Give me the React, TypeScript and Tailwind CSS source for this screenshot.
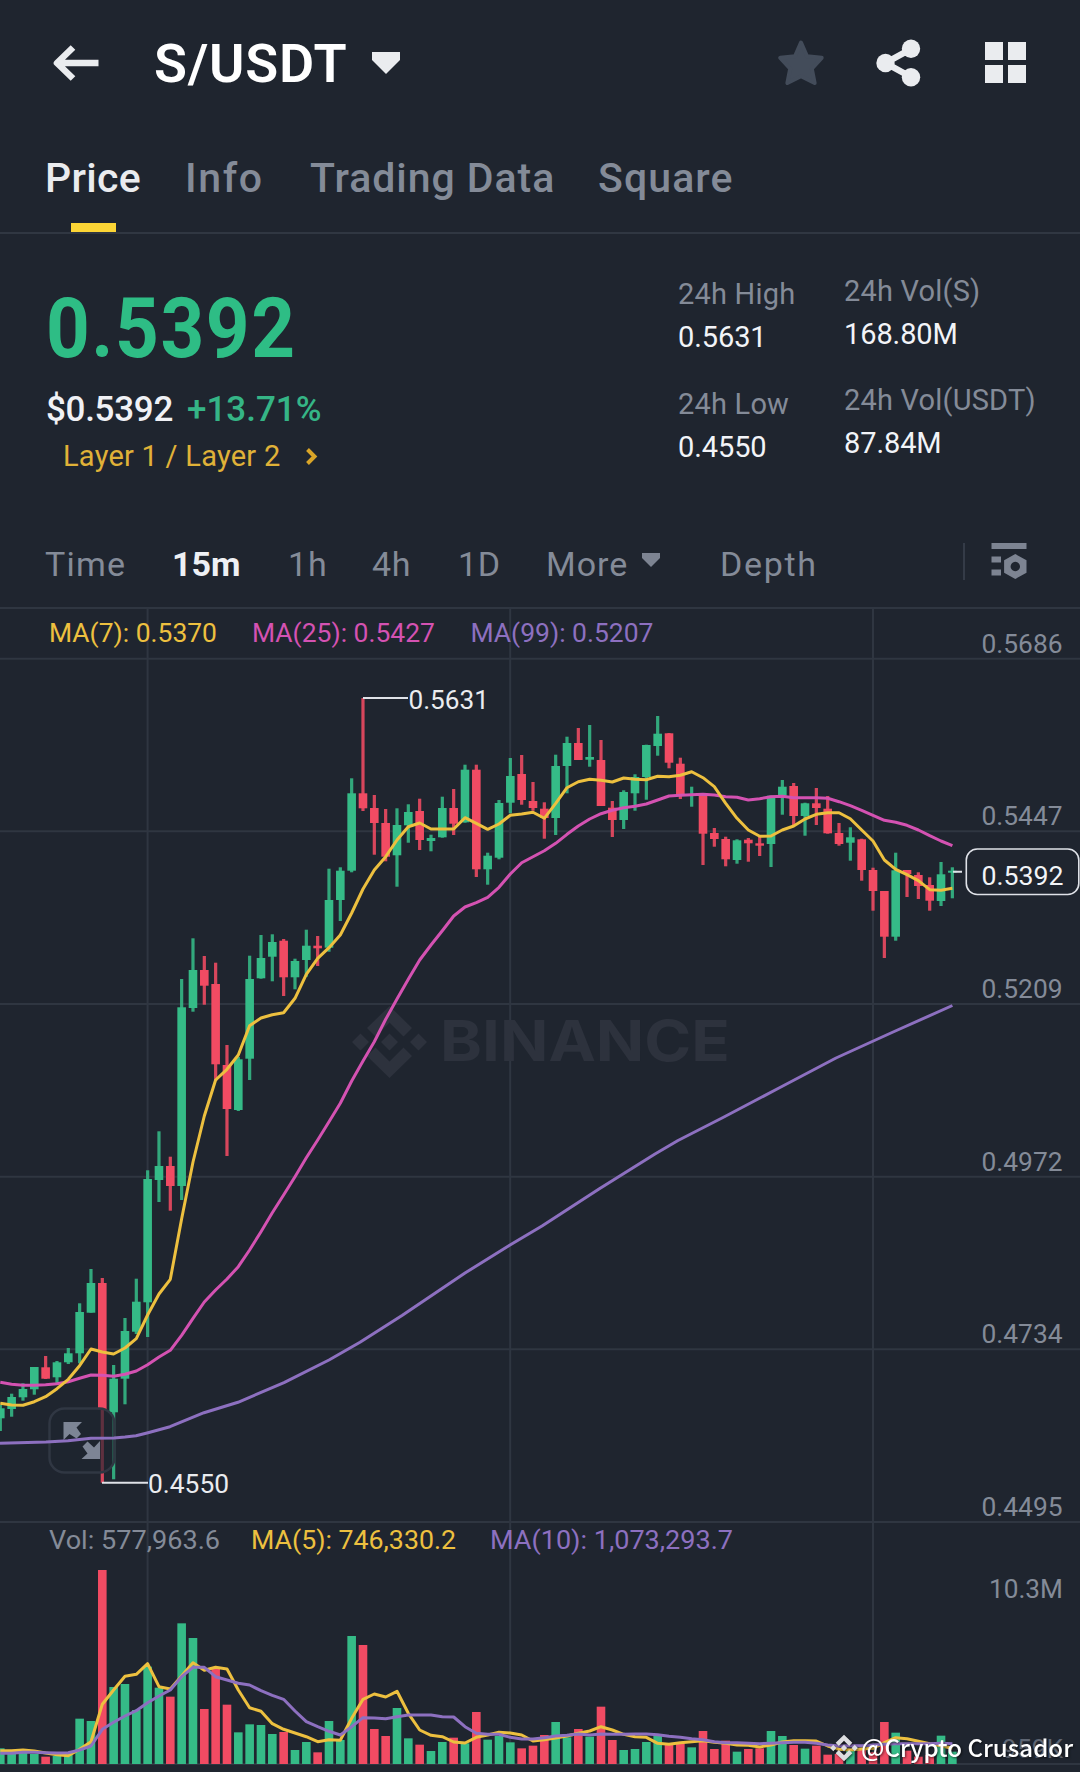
import React from 'react';

const GREEN = '#35bb87';
const RED = '#f14b63';
const GOLD = '#edc03f';
const PINK = '#d452b2';
const PURPLE = '#8d70c0';
const GRID = '#2f3641';
const MUTED = '#848b98';
const LIGHT = '#eaecef';

type Candle = [up: 0 | 1, high: number, top: number, bottom: number, low: number];

// Vertical extents of every 15 minute candle, oldest first.
const candles: Candle[] = [
  [1, 1405, 1408.3, 1418.3, 1431], [1, 1393.7, 1397, 1409, 1416.7], [1, 1383.3, 1389, 1397.3, 1400.7],
  [1, 1367, 1367, 1389.3, 1394.7], [0, 1356, 1367.3, 1378.7, 1379], [1, 1361, 1362.3, 1377.3, 1383.3],
  [1, 1348, 1353.3, 1362.3, 1364], [1, 1303.3, 1312, 1353.3, 1363.3], [1, 1269, 1283, 1312.7, 1312.7],
  [0, 1278, 1283, 1409.3, 1482.7], [1, 1365, 1378.7, 1412.3, 1479.3], [1, 1318, 1331, 1378.7, 1404.3],
  [1, 1278.7, 1301.7, 1331.7, 1334], [1, 1170.3, 1179, 1302.3, 1337], [1, 1131.3, 1166, 1180, 1202],
  [0, 1156.7, 1166, 1186, 1210.7], [1, 979, 1007.3, 1186, 1200], [1, 938.3, 970, 1008, 1011.7],
  [0, 956, 970, 985.7, 1004.7], [0, 962.7, 984, 1064.3, 1081], [0, 1045, 1065, 1109, 1156],
  [1, 1057, 1059.3, 1110, 1111], [1, 955.7, 979, 1058.7, 1080], [1, 935, 958, 978.3, 978.7],
  [1, 934.3, 942, 956.7, 981.3], [0, 939, 940.7, 977.3, 996], [1, 958.7, 961, 977.3, 989.3],
  [1, 929.7, 945.7, 960, 976.7], [0, 936, 945.7, 948.3, 966], [1, 868.7, 900, 947.7, 951.7],
  [1, 867.3, 870.7, 900, 921], [1, 778.3, 793.3, 870.7, 872.3], [0, 698, 793.3, 808.3, 811],
  [0, 795, 808, 823, 854.7], [0, 809, 823, 856.7, 861.3], [1, 808.3, 825, 855.3, 886.7],
  [1, 804.3, 812, 825.3, 842.7], [0, 798.7, 811, 840, 850], [1, 834.7, 838, 841, 851.3],
  [1, 796.7, 808, 837.3, 837.7], [0, 789, 808, 823.7, 835], [1, 764.7, 769.7, 822.3, 822.7],
  [0, 764.7, 769.7, 869.3, 877], [1, 852.7, 855.7, 869.3, 884.7], [1, 800, 803, 857.7, 859.3],
  [1, 758, 776, 802.7, 813.3], [0, 755, 774, 800, 804.7], [0, 782, 801, 808, 810.7],
  [0, 802.3, 808.7, 818, 838.7], [1, 754.7, 766, 818, 835], [1, 736.7, 743, 766, 793.3],
  [0, 728, 743, 760, 760], [1, 725, 757, 759.7, 766.7], [0, 740, 760, 806, 806],
  [0, 801, 807.7, 820, 837], [1, 790.3, 792, 820, 829], [1, 774.3, 777, 793.3, 810.7],
  [1, 744.7, 745, 777, 799.7], [1, 716, 733.7, 746, 755.7], [0, 733, 733.3, 762.7, 768.3],
  [0, 757.7, 763.7, 796, 799], [1, 786.7, 794, 796, 806.7], [0, 794.3, 796, 833.7, 865],
  [0, 828, 833, 839, 846.7], [0, 836.7, 839, 859.3, 866.3], [1, 839.3, 840.3, 860, 863.7],
  [0, 838, 839.7, 843.3, 861.7], [0, 836.7, 843.3, 845.7, 856], [1, 795.7, 795.7, 844, 867],
  [1, 780, 786.7, 795.7, 814.7], [0, 783, 786, 816, 825.3], [1, 802.7, 803.3, 816, 835.7],
  [0, 788, 803.3, 808, 825], [0, 796, 808.7, 833.3, 833.7], [0, 823, 833, 844, 845.7],
  [1, 827.3, 837.3, 842.7, 860.7], [0, 838.7, 839.3, 870, 880.7], [0, 867.7, 870, 891, 910.7],
  [0, 891, 891, 936.7, 958], [1, 852.7, 870.3, 936.7, 940.7], [0, 870, 870, 874, 897],
  [0, 872.3, 875, 886, 899], [0, 877.3, 885, 900.7, 910.7], [1, 862, 874.3, 901, 906],
  [1, 867.3, 870.7, 872.7, 898.3],
];

const ma7 = [
  1403.3, 1405, 1405.3, 1401.7, 1396.7, 1388.7, 1379.3, 1365.7, 1349, 1352, 1354, 1348, 1338.7, 1315, 1294,
  1279.3, 1219, 1162, 1116, 1080, 1069.3, 1055, 1025.7, 1018, 1014.7, 1012.7, 998.3, 974.3, 958.3, 947.7,
  935, 913, 889, 870, 856.7, 840, 826.7, 823, 829, 829, 829, 817.7, 823.3, 829.3, 824, 815.3, 814, 812.3,
  818.3, 803.3, 787.7, 781.7, 779.3, 780.3, 782, 778, 779.3, 779.7, 776.3, 776.7, 775.3, 771.7, 777.7,
  786.7, 803.3, 818.3, 830, 836.3, 836, 830, 826, 819, 814.3, 812.7, 812.7, 818.7, 830, 841, 860, 869.3,
  874.7, 880.7, 889.7, 890.3, 888.3,
];

const ma25 = [
  1382.3, 1384.3, 1385.3, 1385.3, 1384.7, 1383.7, 1381.7, 1378.3, 1375, 1375.3, 1376.3, 1374.3, 1371, 1364.7,
  1357, 1350.3, 1335.3, 1318.3, 1302, 1290, 1279, 1266.7, 1250, 1231.7, 1212.7, 1195, 1176.7, 1157.7, 1140,
  1121.7, 1103.3, 1081, 1061, 1041.7, 1019.3, 999, 979.3, 960, 945, 930.7, 916, 907, 902.7, 897.3, 887.3, 874,
  862.7, 856.7, 850.7, 843.3, 834.3, 826, 819, 813.7, 810.3, 807.7, 806.3, 804, 800, 796, 795.3, 794.7, 794.3,
  795, 796.7, 797.3, 800, 798.7, 796.7, 796.3, 797.7, 797.7, 797.7, 798.3, 801.7, 805.7, 810.3, 815.3, 820.3,
  822.3, 825.3, 830, 835.7, 841, 845.7,
];

const ma99 =
  '0,1443.3 46,1442 68,1440.7 91,1438.3 114,1438 125,1437 136,1435.7 148,1432.7 170,1426.7 204,1412.7 238,1402.3 284,1382.7 329,1360 360,1342.3 402,1315.500 465,1273 510,1245 542,1226 599,1189 655,1154 678,1140.500 723,1117.500 779,1088 836,1058 892,1032.500 952.4,1005.5';

// Volume bars and their averages share the candle order; values are thirds of a pixel below y = 1500.
const volume = [
  745, 762, 757, 762, 770, 768, 762, 656, 663, 210, 561, 552, 630, 500, 563, 590, 370, 414, 627, 507, 614, 697,
  673, 675, 702, 696, 750, 726, 757, 663, 720, 408, 435, 687, 708, 624, 715, 734, 753, 726, 713, 730, 636, 719,
  708, 727, 745, 737, 705, 666, 712, 687, 710, 620, 720, 750, 747, 726, 708, 733, 730, 742, 693, 747, 722, 755,
  747, 745, 693, 708, 735, 746, 737, 764, 762, 752, 750, 757, 666, 698, 752, 770, 765, 707, 755,
];

const vol5 = [
  752, 752, 750, 753, 759, 764, 767, 748, 725, 613, 570, 529, 523, 491, 560, 567, 528, 488, 511, 502, 507, 570,
  623, 634, 671, 688, 699, 710, 725, 719, 721, 655, 598, 582, 591, 574, 640, 690, 706, 710, 726, 729, 712, 705,
  697, 699, 705, 723, 719, 714, 708, 700, 693, 680, 690, 703, 710, 712, 730, 733, 728, 725, 722, 727, 730, 735,
  736, 741, 735, 726, 722, 722, 723, 738, 748, 750, 747, 745, 728, 713, 716, 724, 731, 737, 745,
];

const vol10 = [
  760, 760, 757, 757, 758, 759, 758, 750, 738, 688, 667, 648, 632, 608, 588, 570, 530, 502, 502, 530, 540, 550,
  555, 572, 586, 598, 633, 665, 680, 694, 705, 680, 653, 654, 656, 650, 645, 645, 645, 650, 651, 680, 700, 703,
  703, 712, 717, 717, 713, 708, 706, 702, 705, 702, 703, 703, 702, 702, 704, 709, 712, 716, 719, 725, 728, 728,
  730, 731, 730, 728, 727, 727, 730, 735, 738, 737, 737, 735, 733, 731, 731, 731, 731, 730, 731,
];

const cx = (i: number) => 0.3 + 11.334 * i;
const vy = (v: number) => 1500 + v / 3;
const line = (ys: number[]) => ys.map((y, i) => `${cx(i).toFixed(1)},${y.toFixed(1)}`).join(' ');

function Label({ x, y, w, fill, size = 26, children }: {
  x: number; y: number; w: number; fill: string; size?: number; children: string;
}) {
  return (
    <text x={x} y={y} fill={fill} fontSize={size} textLength={w} lengthAdjust="spacingAndGlyphs">
      {children}
    </text>
  );
}

function Header() {
  return (
    <header className="flex h-[125px] items-center">
      <svg className="ml-[52px] h-[40px] w-[48px]" viewBox="52 42.5 48 40" fill="none" stroke={LIGHT} strokeWidth="6.6">
        <path d="M73 47 57 62.5 73 78M58 62.5H98.5" strokeLinejoin="round" />
      </svg>
      <h1 className="ml-[54px] w-[218px] pt-[3px] text-[54px] leading-[60px] font-semibold tracking-[0.8px] text-white">S/USDT</h1>
      <svg className="h-[22px] w-[28px]" viewBox="0 0 28 22" fill={LIGHT}>
        <path d="M0 0h28v8L14 22 0 8z" />
      </svg>
      <svg className="ml-[378px] h-[46px] w-[46px]" viewBox="0 0 46 46" fill="#434c5a" stroke="#434c5a" strokeWidth="4" strokeLinejoin="round">
        <path d="M23 2.5 29 16.3 43.7 17.8 33.8 28.6 36.6 43 23 36.2 9.4 43 12.2 28.6 2.3 17.8 17 16.3z" />
      </svg>
      <svg className="ml-[52px] h-[48px] w-[45px]" viewBox="875 38.5 45 48" fill={LIGHT} stroke={LIGHT}>
        <path d="M910 48.5 884.5 62.5 910 76.5" fill="none" strokeWidth="6.5" />
        <g stroke="none">
          <circle cx="884.5" cy="62.5" r="9.2" />
          <circle cx="910" cy="48.3" r="9.2" />
          <circle cx="910" cy="76.7" r="9.2" />
        </g>
      </svg>
      <div className="ml-[64px] grid grid-cols-2 gap-[4.5px]">
        {[0, 1, 2, 3].map((n) => (
          <span key={n} className="size-[18.3px] bg-[#eaecef]" />
        ))}
      </div>
    </header>
  );
}

function Tabs() {
  return (
    <nav className="flex h-[109px] border-b-2 border-[#303742] pt-[28px] pl-[45px] text-[41px] leading-[50px] font-medium text-[#848b98]">
      <div className="w-[140px]">
        <div className="tracking-[0.3px] text-[#eaecef]">Price</div>
        <div className="mt-5 ml-[26px] h-[9px] w-[45px] bg-[#fcd535]" />
      </div>
      <div className="w-[125px] tracking-[1.6px]">Info</div>
      <div className="w-[288px] tracking-[0.95px]">Trading Data</div>
      <div className="tracking-[1.1px]">Square</div>
    </nav>
  );
}

function Stat({ label, value }: { label: string; value: string }) {
  return (
    <div>
      <div className="tracking-[0.2px] text-[#848b98]">{label}</div>
      <div className="mt-[7px] tracking-[-0.1px] text-[#f2f4f8]">{value}</div>
    </div>
  );
}

function Summary() {
  return (
    <section className="flex h-[286px]">
      <div className="w-[678px] pt-[50px]">
        <div className="ml-[46px] h-[90px] w-[300px] origin-left scale-x-[0.92] text-[83px] leading-[90px] font-bold tracking-[1.7px] text-[#2ebd85]">
          0.5392
        </div>
        <div className="mt-[16px] ml-[46px] flex text-[35px] leading-10 font-medium">
          <span className="w-[141px] tracking-[-0.3px] text-[#f0f1f5]">$0.5392</span>
          <span className="text-[#35b586]">+13.71%</span>
        </div>
        <div className="mt-[6px] ml-[63px] flex items-center text-[29px] leading-10 text-[#e0b238]">
          <span className="w-[243px] tracking-[0.25px]">Layer 1 / Layer 2</span>
          <svg className="h-[17px] w-[12px]" viewBox="0 0 12 17" fill="none" stroke="#d9a528" strokeWidth="4">
            <path d="M1.5 1.5 8.5 8.5l-7 7" />
          </svg>
        </div>
      </div>
      <div className="flex text-[29px] leading-9">
        <div className="flex w-[166px] flex-col gap-[31px] pt-[42px]">
          <Stat label="24h High" value="0.5631" />
          <Stat label="24h Low" value="0.4550" />
        </div>
        <div className="flex flex-col gap-[30px] pt-[38.5px]">
          <Stat label="24h Vol(S)" value="168.80M" />
          <Stat label="24h Vol(USDT)" value="87.84M" />
        </div>
      </div>
    </section>
  );
}

function Toolbar() {
  return (
    <div className="flex h-[87px] items-center pl-[45px] text-[34px] leading-[40px] text-[#848b98]">
      <span className="w-[127px] tracking-[1.2px]">Time</span>
      <span className="w-[116px] font-bold text-[#eef0f4]">15m</span>
      <span className="w-[84px] tracking-[0.8px]">1h</span>
      <span className="w-[86px] tracking-[0.6px]">4h</span>
      <span className="w-[88px] tracking-[0.6px]">1D</span>
      <span className="w-[96px] tracking-[1px]">More</span>
      <svg className="mb-[8px] h-[14px] w-[18px]" viewBox="0 0 18 14" fill="#7d8492">
        <path d="M0 0h18v5L9 14 0 5z" />
      </svg>
      <span className="ml-[60px] w-[243px] tracking-[1.7px]">Depth</span>
      <span className="mb-[5px] h-[37px] w-[2px] bg-[#343b47]" />
      <svg className="mb-[5px] ml-[26px] h-[38px] w-[36px]" viewBox="990.5 542.5 36 38" fill="#7d8492">
        <path d="M991 543.5h35v6h-35zM991 557h9.500v6h-9.500zM991 570h9.500v6h-9.500z" />
        <path fillRule="evenodd" d="M1014.800 554.500l11.200 6.200v12.600l-11.200 6.200-11.200-6.200v-12.600zM1014.800 562.300a4.700 4.700 0 1 0 .01 0z" />
      </svg>
    </div>
  );
}

function BinanceMark({ x, y, s, fill }: { x: number; y: number; s: number; fill: string }) {
  return (
    <g transform={`translate(${x} ${y}) scale(${s})`} fill={fill}>
      <path d="M0-36 22.500-14 14-5.500 0-19.500-14-5.500-22.500-14z" />
      <path d="M0 36 22.500 14 14 5.500 0 19.500-14 5.500-22.500 14z" />
      <path d="M0-8.500 8.500 0 0 8.500-8.500 0zM-29-8.500-20.500 0-29 8.500-37.500 0zM29-8.500 37.500 0 29 8.500 20.500 0z" />
    </g>
  );
}

function Chart() {
  const prices = ['0.5686', '0.5447', '0.5209', '0.4972', '0.4734', '0.4495'];
  return (
    <svg className="block h-[1165px] w-[1080px]" viewBox="0 607 1080 1165" fontFamily="Roboto, sans-serif">
      <g stroke={GRID} strokeWidth="2">
        <path d="M0 608H1080" />
        {prices.map((p, i) => (
          <path key={p} d={`M0 ${658.7 + 172.66 * i}H1080`} />
        ))}
        <path d="M0 1764H1080" />
        <path d="M147.600 608V1764M510.200 608V1764M873 608V1764" />
      </g>

      <BinanceMark x={389.500} y={1042} s={1} fill="#2d323d" />
      <text x="440" y="1061" fontSize="57" fontWeight="700" fill="#2d323d" fontFamily="Inter, sans-serif" textLength="290" lengthAdjust="spacingAndGlyphs">
        BINANCE
      </text>

      {candles.map(([up, high, top, bottom, low], i) => (
        <g key={i} fill={up ? GREEN : RED}>
          <rect x={cx(i) - 1.600} y={high} width="3.200" height={low - high} opacity="0.88" />
          <rect x={cx(i) - 4.300} y={top} width="8.600" height={bottom - top} />
          <rect x={cx(i) - 4.300} y={vy(volume[i])} width="8.600" height={1764 - vy(volume[i])} />
        </g>
      ))}

      <rect x="49.500" y="1408.500" width="65" height="64" rx="15" fill="#1f252f" fillOpacity="0.65" stroke="#303743" strokeWidth="2.500" />
      <g fill="#7d8595">
        <path d="M63.500 1422H82L76.500 1427.500 81 1434 76.500 1438.500 69.500 1434 63.500 1440z" />
        <path d="M100 1459H81.500L87.500 1453.500 82.500 1446.500 87.500 1441.500 94 1447.500 100 1441z" />
      </g>

      <g fill="none" strokeWidth="3" strokeLinejoin="round">
        <polyline points={ma99} stroke={PURPLE} />
        <polyline points={line(ma25)} stroke={PINK} />
        <polyline points={line(ma7)} stroke={GOLD} />
        <polyline points={line(vol5.map(vy))} stroke={GOLD} />
        <polyline points={line(vol10.map(vy))} stroke={PURPLE} />
      </g>

      <Label x={49} y={641.700} w={168} fill={GOLD}>MA(7): 0.5370</Label>
      <Label x={252} y={641.700} w={183} fill={PINK}>MA(25): 0.5427</Label>
      <Label x={470.500} y={641.700} w={183} fill={PURPLE}>MA(99): 0.5207</Label>
      <Label x={49} y={1549} w={171} fill={MUTED}>Vol: 577,963.6</Label>
      <Label x={251} y={1549} w={205} fill={GOLD}>MA(5): 746,330.2</Label>
      <Label x={490} y={1549} w={243} fill={PURPLE}>MA(10): 1,073,293.7</Label>

      {prices.map((p, i) => (
        <Label key={p} x={981.500} y={652.700 + 172.600 * i} w={81} fill={MUTED}>{p}</Label>
      ))}
      <Label x={989} y={1597.700} w={74} fill={MUTED}>10.3M</Label>
      <Label x={1002} y={1757.500} w={61} fill="#5f6673">959K</Label>

      <path d="M363 698H408M102 1482.700H148M953 871.700H962" stroke="#dfe2e8" strokeWidth="2" />
      <Label x={408.500} y={709} w={80.500} fill={LIGHT}>0.5631</Label>
      <Label x={148} y={1492.700} w={81} fill={LIGHT}>0.4550</Label>

      <rect x="966.300" y="849" width="112.500" height="45.500" rx="11" fill="#1f252f" stroke="#dfe2e8" strokeWidth="1.600" />
      <Label x={981.500} y={884.600} w={82} fill="#f2f4f8">0.5392</Label>

      <g className="drop-shadow-[1px_1px_1px_rgba(0,0,0,0.6)]">
        <BinanceMark x={844} y={1748} s={0.37} fill="#dcdde0" />
        <text x="861" y="1757" fontSize="24" fontWeight="500" fill="#ffffff" fontFamily="'Noto Sans CJK SC', sans-serif" textLength="212" lengthAdjust="spacingAndGlyphs">
          @Crypto Crusador
        </text>
      </g>
    </svg>
  );
}

export default function App() {
  return (
    <main className="h-[1772px] w-[1080px] overflow-hidden bg-[#1f252f] font-[Roboto,sans-serif]">
      <Header />
      <Tabs />
      <Summary />
      <Toolbar />
      <Chart />
    </main>
  );
}
